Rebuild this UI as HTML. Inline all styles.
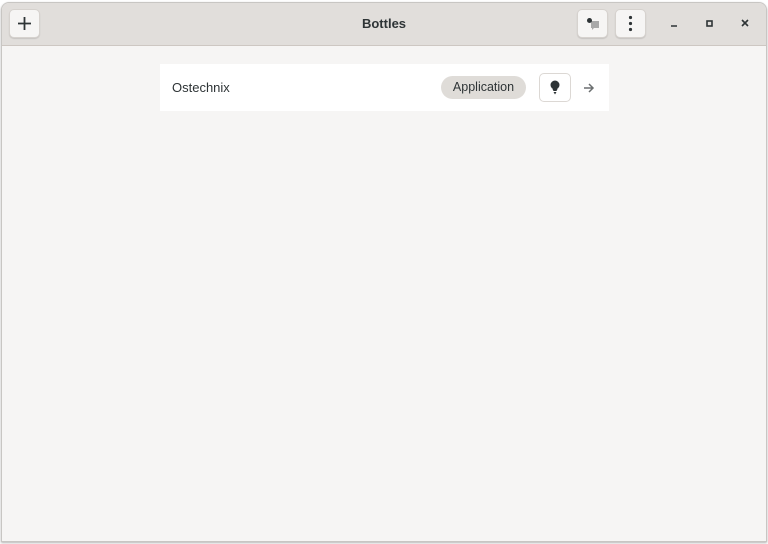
<!DOCTYPE html>
<html><head><style>
body{margin:0;width:768px;height:544px;background:#fff;font-family:"Liberation Sans",sans-serif;overflow:hidden;position:relative}
.win{position:absolute;left:1px;top:2px;width:766px;height:540px;background:#f6f5f4;border:1px solid #c8c6c3;border-top-left-radius:8px;border-top-right-radius:8px;box-sizing:border-box;overflow:hidden;box-shadow:0 1px 2px rgba(0,0,0,.3)}
.hb{position:absolute;left:0;top:0;right:0;height:42px;background:#e1dedb;border-bottom:1px solid #cdc7c2}
.btn{position:absolute;width:31px;height:29px;background:#f6f5f4;border-radius:5px;box-shadow:0 1px 1px rgba(0,0,0,.12);border:1px solid #d6d2ce;box-sizing:border-box}
.title{position:absolute;left:0;right:0;top:13px;text-align:center;font-weight:bold;font-size:13px;color:#2e3436}
.row{position:absolute;left:158px;top:61px;width:449px;height:47px;background:#fff}
</style></head><body>
<div class="win">
<div class="hb">
 <div class="btn" style="left:7px;top:6px"><svg width="29" height="27"><path d="M14.5 7v13M8 13.5h13" stroke="#2e3436" stroke-width="1.8"/></svg></div>
 <div class="title">Bottles</div>
 <div class="btn" style="left:575px;top:6px"><svg width="29" height="27"><rect x="13" y="11" width="8" height="7" fill="#a9a9a9"/><path d="M14 17v3l3-3z" fill="#a9a9a9"/><circle cx="11.5" cy="10.5" r="2.5" fill="#2e3436"/></svg></div>
 <div class="btn" style="left:613px;top:6px"><svg width="29" height="27"><circle cx="14.5" cy="7.5" r="1.6" fill="#2e3436"/><circle cx="14.5" cy="13.5" r="1.6" fill="#2e3436"/><circle cx="14.5" cy="19.5" r="1.6" fill="#2e3436"/></svg></div>
 <svg style="position:absolute;left:660px;top:12px" width="100" height="20"><path d="M9 11h6" stroke="#2e3436" stroke-width="1.6"/><rect x="45" y="6" width="5" height="5" fill="none" stroke="#2e3436" stroke-width="1.6"/><path d="M80 5l6 6M86 5l-6 6" stroke="#2e3436" stroke-width="1.6"/></svg>
</div>
<div class="row">
 <div style="position:absolute;left:12px;top:16px;font-size:13px;color:#2e3436">Ostechnix</div>
 <div style="position:absolute;left:281px;top:12px;width:85px;height:23px;border-radius:12px;background:#dfdcd8;font-size:12.5px;color:#2e3436;text-align:center;line-height:23px">Application</div>
 <div style="position:absolute;left:379px;top:9px;width:32px;height:29px;border:1px solid #dcd8d4;border-radius:5px;box-sizing:border-box;background:#fff"><svg width="30" height="27"><circle cx="15" cy="11" r="4.5" fill="#2e3436"/><path d="M12.5 15h5l-1 2h-3zM13.5 18h3l-1.5 2.5z" fill="#2e3436"/></svg></div>
 <svg style="position:absolute;left:422px;top:17px" width="14" height="14"><path d="M2 7h9M7 3l4 4-4 4" stroke="#6b6f70" stroke-width="1.5" fill="none"/></svg>
</div>
</div>
</body></html>
